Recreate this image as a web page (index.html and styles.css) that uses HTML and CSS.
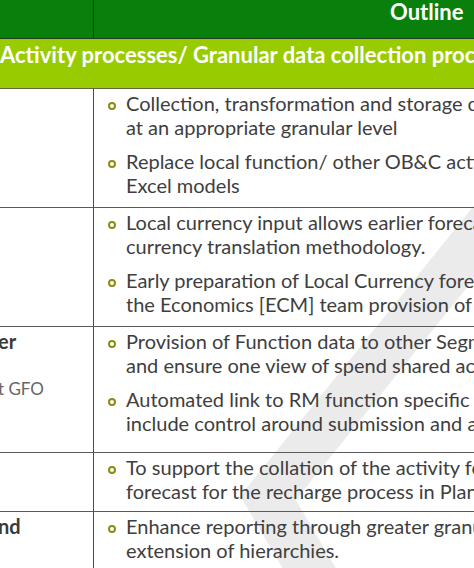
FILE: index.html
```html
<!DOCTYPE html>
<html lang="en">
<head>
<meta charset="utf-8">
<title>Outline</title>
<link rel="stylesheet" href="styles.css">
</head>
<body>
<svg class="watermark" width="474" height="568" viewBox="0 0 474 568" aria-hidden="true">
  <polyline points="520,185 268,498 335,612" />
</svg>
<div class="sheet">
  <div class="head">
    <div class="head-left"></div>
    <div class="head-title">Outline</div>
  </div>
  <div class="band">Activity processes/ Granular data collection processes</div>

  <div class="row r1">
    <div class="lcell"></div>
    <div class="rcell">
      <ul>
        <li><span>Collection, transformation and storage of<br>at an appropriate granular level</span></li>
        <li><span>Replace local function/ other OB&amp;C activities<br>Excel models</span></li>
      </ul>
    </div>
  </div>

  <div class="row r2">
    <div class="lcell"></div>
    <div class="rcell">
      <ul>
        <li><span>Local currency input allows earlier forecasting<br>currency translation methodology.</span></li>
        <li><span>Early preparation of Local Currency forecasts<br>the Economics [ECM] team provision of the</span></li>
      </ul>
    </div>
  </div>

  <div class="row r3">
    <div class="lcell">
      <div class="lline strong">er</div>
      <div class="lline">&nbsp;</div>
      <div class="lline light">t GFO</div>
    </div>
    <div class="rcell">
      <ul>
        <li><span>Provision of Function data to other Segments<br>and ensure one view of spend shared across</span></li>
        <li><span>Automated link to RM function specific RM<br>include control around submission and approval</span></li>
      </ul>
    </div>
  </div>

  <div class="row r4">
    <div class="lcell"></div>
    <div class="rcell">
      <ul>
        <li><span>To support the collation of the activity forecast<br>forecast for the recharge process in Planning</span></li>
      </ul>
    </div>
  </div>

  <div class="row r5">
    <div class="lcell">
      <div class="lline strong">nd</div>
    </div>
    <div class="rcell">
      <ul>
        <li><span>Enhance reporting through greater granularity<br>extension of hierarchies.</span></li>
      </ul>
    </div>
  </div>
</div>
</body>
</html>
```

FILE: styles.css
```css
html, body {
  margin: 0;
  padding: 0;
  background: #ffffff;
}

body {
  width: 474px;
  height: 568px;
  overflow: hidden;
  position: relative;
  font-family: Lato, "Open Sans", "DejaVu Sans", sans-serif;
  color: #3e3e3e;
}

.watermark {
  position: absolute;
  left: 0;
  top: 0;
  z-index: 0;
  pointer-events: none;
}

.watermark polyline {
  fill: none;
  stroke: #000000;
  stroke-opacity: 0.08;
  stroke-width: 46;
  stroke-linejoin: miter;
}

.sheet {
  position: relative;
  z-index: 1;
  width: 474px;
}

.head {
  display: grid;
  grid-template-columns: 94px 1fr;
  height: 39px;
  box-sizing: border-box;
  background: #0a800c;
  border-bottom: 1px solid #1f3f1f;
}

.head-left {
  border-right: 1px solid #163816;
}

.head-title {
  color: #ffffff;
  font-weight: 700;
  font-size: 22px;
  line-height: 22px;
  padding-top: 1px;
  padding-left: 296px;
  white-space: nowrap;
  overflow: hidden;
}

.band {
  height: 50px;
  box-sizing: border-box;
  background: #99cc00;
  border-bottom: 1px solid #5f6a3a;
  color: #ffffff;
  font-weight: 700;
  font-size: 22px;
  line-height: 22px;
  padding-top: 5px;
  white-space: nowrap;
  overflow: hidden;
}

.row {
  display: grid;
  grid-template-columns: 94px 1fr;
  border-bottom: 1px solid #5a5a5a;
  font-size: 20px;
  line-height: 24px;
}

.lcell {
  border-right: 1px solid #4a4a4a;
  padding-top: 2px;
  white-space: nowrap;
  overflow: hidden;
  font-size: 17px;
}

.lline {
  margin-left: -2px;
}

.lline.strong {
  font-size: 20px;
  font-weight: 700;
  color: #3a3a3a;
}

.lline.light {
  color: #666666;
}

.rcell {
  padding-top: 2px;
  padding-left: 14px;
  white-space: nowrap;
  overflow: hidden;
}

.r1 .rcell, .r2 .rcell { padding-bottom: 10px; }
.r3 .rcell { padding-bottom: 17px; }
.r4 .rcell { padding-bottom: 8px; }
.r5 .rcell { padding-bottom: 20px; }

.rcell ul {
  list-style: none;
  margin: 0;
  padding: 0;
  display: flex;
  flex-direction: column;
  gap: 10px;
}

.rcell li {
  display: flex;
  align-items: flex-start;
  gap: 10px;
}

.rcell li::before {
  content: "";
  flex: 0 0 auto;
  width: 4px;
  height: 4px;
  margin-top: 11px;
  border: 2px solid #8a8c14;
  border-radius: 50%;
}
```
